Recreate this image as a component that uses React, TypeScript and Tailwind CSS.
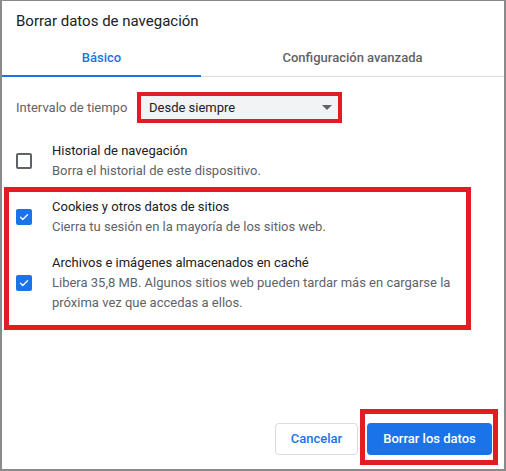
import React from "react";

const Check = ({ checked }: { checked: boolean }) =>
  checked ? (
    <div className="w-4 h-4 rounded-[2px] bg-[#1a73e8] flex items-center justify-center shrink-0">
      <svg width="12" height="12" viewBox="0 0 24 24" fill="none">
        <path d="M5 12.5l4.5 4.5L19 7.5" stroke="#fff" strokeWidth="2.6" strokeLinecap="round" strokeLinejoin="round" />
      </svg>
    </div>
  ) : (
    <div className="w-4 h-4 rounded-[2px] border-2 border-[#5f6368] shrink-0" />
  );

const Row = ({ checked, title, sub }: { checked: boolean; title: string; sub: string }) => (
  <div className="flex items-center">
    <Check checked={checked} />
    <div className="ml-5 w-[436px] shrink-0 text-[13px] leading-[20px]">
      <div className="text-[#202124]">{title}</div>
      <div className="text-[#5f6368]">{sub}</div>
    </div>
  </div>
);

export default function App() {
  return (
    <div
      className="w-[506px] h-[471px] bg-white border-t border-x-2 border-b-2 border-[#8a8a8a] flex flex-col overflow-hidden"
      style={{ fontFamily: "Roboto, 'Noto Sans', sans-serif" }}
    >
      <div className="h-[36px] pt-[10px] pl-[14px] text-[15px] leading-[20px] text-[#202124]">
        Borrar datos de navegación
      </div>
      <div className="h-[40px] flex border-b border-[#dadce0]">
        <div className="w-[199px] -mb-px pt-[3px] border-b-2 border-[#1a73e8] flex items-center justify-center text-[13px] font-medium text-[#1a73e8]">
          Básico
        </div>
        <div className="flex-1 pt-[3px] flex items-center justify-center text-[13px] font-medium text-[#5f6368]">
          Configuración avanzada
        </div>
      </div>
      <div className="mt-[15px] flex items-center pl-[14px]">
        <div className="w-[121px] text-[13px] text-[#5f6368]">Intervalo de tiempo</div>
        <div className="w-[205px] h-[31px] border-4 border-[#e31b23]">
          <div className="h-full bg-[#f1f3f4] flex items-center justify-between pl-2 pr-[6px]">
            <span className="text-[13px] text-[#202124]">Desde siempre</span>
            <svg width="10" height="5" viewBox="0 0 10 5">
              <path d="M0 0h10L5 5z" fill="#5f6368" />
            </svg>
          </div>
        </div>
      </div>
      <div className="mt-[18px] pl-[14px]">
        <Row checked={false} title="Historial de navegación" sub="Borra el historial de este dispositivo." />
      </div>
      <div className="mt-[6px] ml-[2px] w-[467px] border-[5px] border-[#e31b23] pl-[7px] pt-[5px] pb-[12px] flex flex-col gap-4">
        <Row checked={true} title="Cookies y otros datos de sitios" sub="Cierra tu sesión en la mayoría de los sitios web." />
        <Row
          checked={true}
          title="Archivos e imágenes almacenados en caché"
          sub="Libera 35,8 MB. Algunos sitios web pueden tardar más en cargarse la próxima vez que accedas a ellos."
        />
      </div>
      <div className="mt-auto flex justify-end items-start pr-[6px] pb-[4px]">
        <button className="mt-[14px] mr-[2px] w-[83px] h-[32px] rounded-[4px] border border-[#dadce0] text-[13px] font-medium text-[#1a73e8] bg-white">
          Cancelar
        </button>
        <div className="w-[138px] h-[56px] border-[5px] border-[#e31b23] pl-[2px] pt-[9px]">
          <button className="w-[125px] h-[32px] rounded-[4px] bg-[#1a73e8] text-white text-[13px] font-medium">
            Borrar los datos
          </button>
        </div>
      </div>
    </div>
  );
}
